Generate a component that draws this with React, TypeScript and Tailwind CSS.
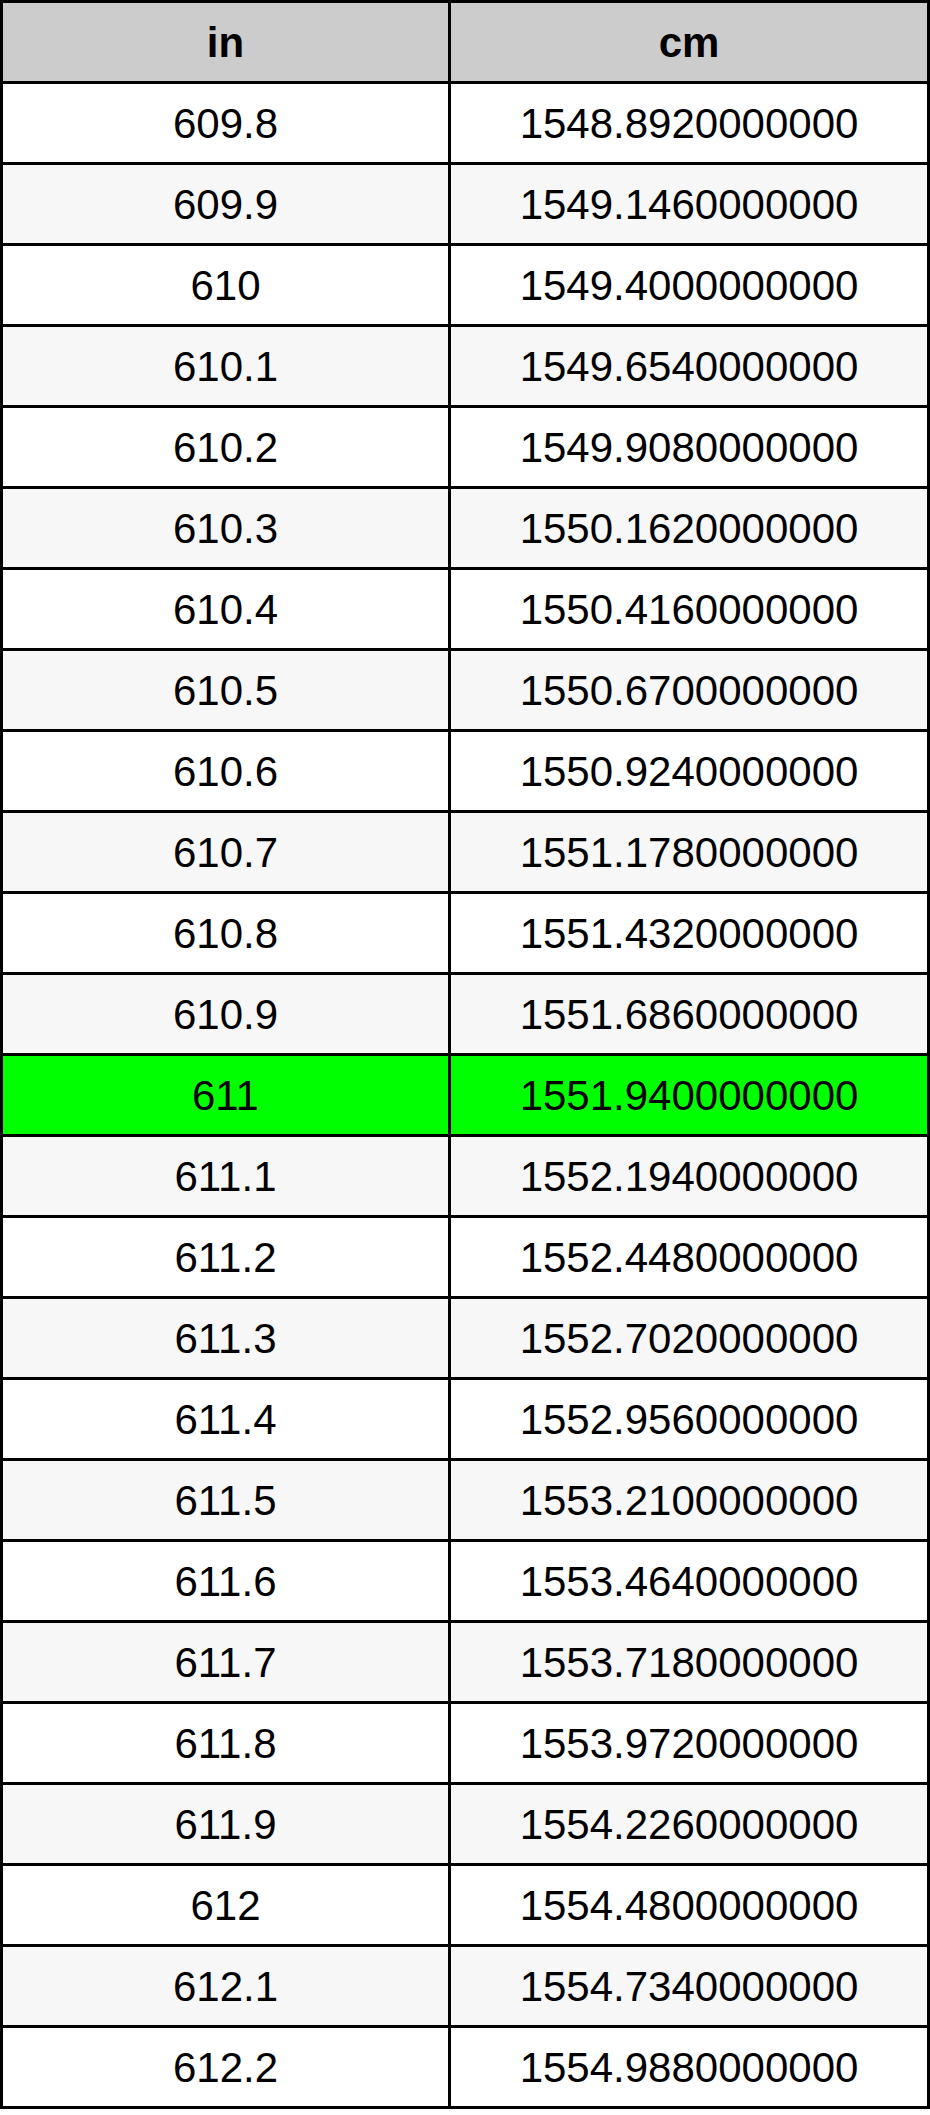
import React from "react";

const rows: [string, string][] = [
  ["609.8", "1548.8920000000"],
  ["609.9", "1549.1460000000"],
  ["610", "1549.4000000000"],
  ["610.1", "1549.6540000000"],
  ["610.2", "1549.9080000000"],
  ["610.3", "1550.1620000000"],
  ["610.4", "1550.4160000000"],
  ["610.5", "1550.6700000000"],
  ["610.6", "1550.9240000000"],
  ["610.7", "1551.1780000000"],
  ["610.8", "1551.4320000000"],
  ["610.9", "1551.6860000000"],
  ["611", "1551.9400000000"],
  ["611.1", "1552.1940000000"],
  ["611.2", "1552.4480000000"],
  ["611.3", "1552.7020000000"],
  ["611.4", "1552.9560000000"],
  ["611.5", "1553.2100000000"],
  ["611.6", "1553.4640000000"],
  ["611.7", "1553.7180000000"],
  ["611.8", "1553.9720000000"],
  ["611.9", "1554.2260000000"],
  ["612", "1554.4800000000"],
  ["612.1", "1554.7340000000"],
  ["612.2", "1554.9880000000"],
];

export default function App() {
  return (
    <div className="bg-white w-[930px]" style={{ fontFamily: '"Liberation Sans", Arial, sans-serif' }}>
      <div className="grid grid-cols-[445px_476px] gap-[3px] p-[3px] bg-black text-black">
        <div className="h-[78px] flex items-center justify-center bg-[#cccccc] text-[42px] font-bold">in</div>
        <div className="h-[78px] flex items-center justify-center bg-[#cccccc] text-[42px] font-bold">cm</div>
        {rows.map(([a, b], i) => {
          const bg = a === "611" ? "bg-[#00ff00]" : i % 2 === 1 ? "bg-[#f7f7f7]" : "bg-white";
          return (
            <React.Fragment key={a}>
              <div className={`h-[78px] flex items-center justify-center text-[42px] ${bg}`}>{a}</div>
              <div className={`h-[78px] flex items-center justify-center text-[42px] ${bg}`}>{b}</div>
            </React.Fragment>
          );
        })}
      </div>
    </div>
  );
}
